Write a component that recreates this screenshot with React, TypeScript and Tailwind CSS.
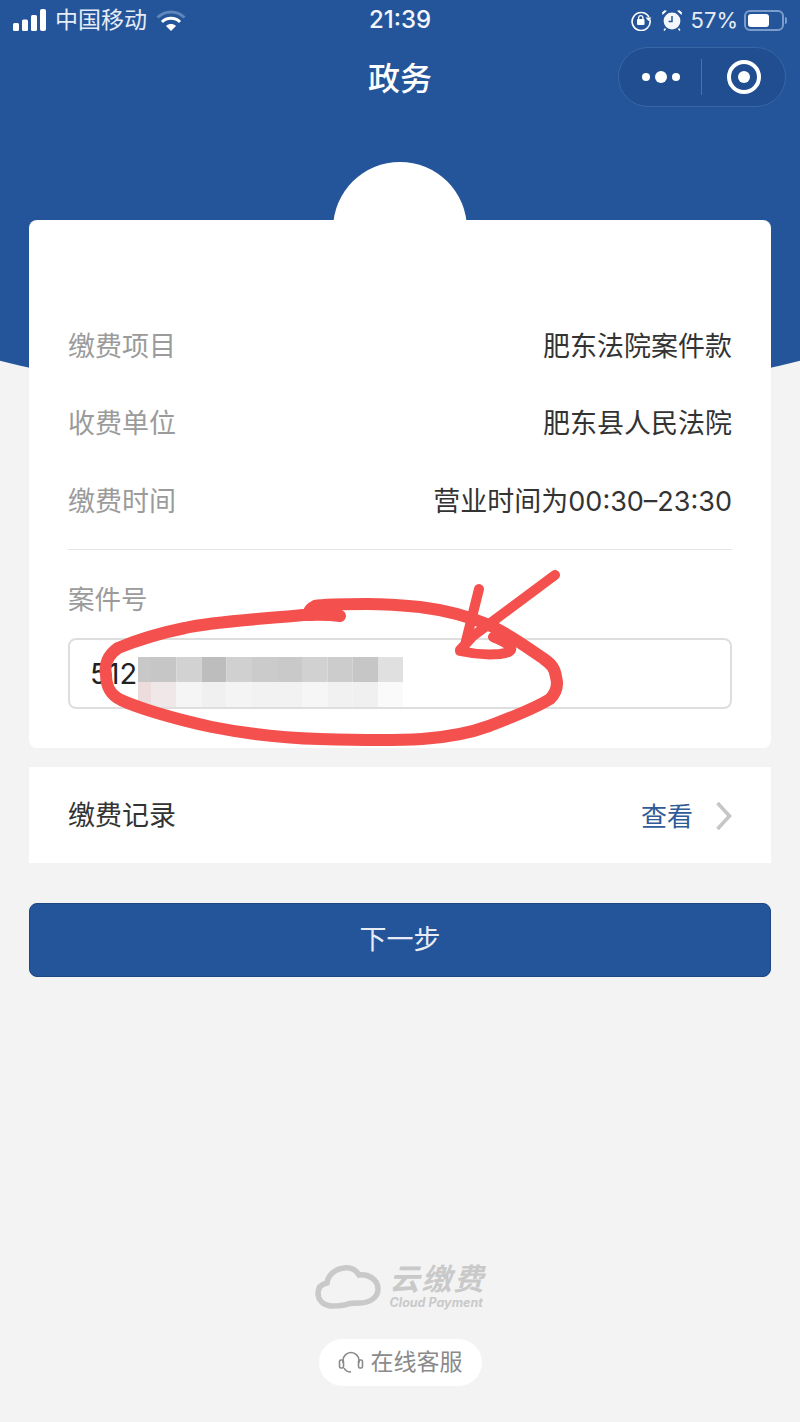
const rows = [
  { label: '缴费项目', value: '肥东法院案件款' },
  { label: '收费单位', value: '肥东县人民法院' },
  { label: '缴费时间', value: '营业时间为00:30–23:30' },
]

// mosaic over the case number: [x, width, top colour, bottom colour]
const mosaic = [
  [138, 13, '#c8c8c8', '#ecdcdc'],
  [151, 25.5, '#c6c6c6', '#f0e8e8'],
  [176.5, 25, '#d2d2d2', '#f5f5f5'],
  [201.5, 25, '#bdbdbd', '#f0f0f0'],
  [226.5, 25.5, '#d0d0d0', '#f4f4f4'],
  [252, 25, '#cbcbcb', '#f2f2f2'],
  [277, 25, '#c9c9c9', '#f2f2f2'],
  [302, 25.5, '#d1d1d1', '#f6f6f6'],
  [327.5, 25, '#cccccc', '#f1f1f1'],
  [352.5, 25.5, '#c6c6c6', '#f0f0f0'],
  [378, 25, '#e0e0e0', '#fafafa'],
] as const

const StatusIcons = () => (
  <div className="flex items-center">
    {/* rotation lock */}
    <svg width="22" height="22" viewBox="0 0 22 22" className="mr-[9px]" fill="none">
      <path d="M18.6 7.5A9 9 0 1 0 20 11" stroke="#fff" strokeWidth="1.6" strokeLinecap="round" />
      <path d="M15.5 8.5h6l-3 3.6z" fill="#fff" />
      <rect x="7" y="10" width="7.5" height="6" rx="1" fill="#fff" />
      <path d="M8.6 10V8.3a2.2 2.2 0 0 1 4.3 0V10" stroke="#fff" strokeWidth="1.3" />
    </svg>
    {/* alarm */}
    <svg width="22" height="22" viewBox="0 0 22 22" className="mr-[8px]">
      <circle cx="11" cy="12" r="8.4" fill="#f4f6fa" />
      <path d="M11 7v5.400H7.600" stroke="#24559a" strokeWidth="1.500" fill="none" />
      <path d="M1.500 6 6 1.800 3.600 1.200 1 3.400zM20.500 6 16 1.800l2.400-.6L21 3.400z" fill="#fff" />
      <path d="M4.500 19.500 3 21.500M17.500 19.500l1.500 2" stroke="#fff" strokeWidth="1.400" />
    </svg>
    <span className="text-[22px] leading-none text-[#e6ecf5] mr-[6px]">57%</span>
    {/* battery */}
    <div className="w-[40px] h-[21px] rounded-[6px] border-2 border-[#7c9ccb] p-[2px] mr-[1px]">
      <div className="w-[21px] h-full rounded-[3px] bg-white" />
    </div>
    <div className="w-[2px] h-[7px] rounded-r-full bg-[#7c9ccb]" />
  </div>
)

export default function App() {
  return (
    <div className="relative w-[800px] h-[1422px] overflow-hidden bg-[#f3f3f3] font-['Inter','Noto_Sans_CJK_SC',sans-serif]">
      {/* blue header shape behind everything */}
      <div className="absolute top-0 left-0 w-full h-[234px] bg-[#24559a]" />
      <div className="absolute top-[64px] left-[-200px] w-[1200px] h-[340px] rounded-[50%] bg-[#24559a]" />

      <div className="relative flex flex-col">
        {/* status bar */}
        <div className="grid grid-cols-[1fr_auto_1fr] items-center h-[40px] pl-[13px] pr-[13px] text-white">
          <div className="flex items-center">
            <svg width="33" height="22" viewBox="0 0 33 22" className="mr-[9px]" fill="#fff">
              <rect x="0" y="14" width="6" height="8" rx="1.500" />
              <rect x="9" y="10.500" width="6" height="11.500" rx="1.500" />
              <rect x="18" y="6" width="6" height="16" rx="1.500" />
              <rect x="27" y="0" width="6" height="22" rx="2" />
            </svg>
            <span className="text-[23px] leading-none text-[#e6ecf5]">中国移动</span>
            <svg width="30" height="24" viewBox="0 0 30 24" className="ml-[9px]" fill="none">
              <path d="M1.500 9.500C9 2 21 2 28.500 9.500" stroke="#5f86bb" strokeWidth="3" />
              <path d="M6 14c5-5 13-5 18 0" stroke="#fff" strokeWidth="3" />
              <path d="M15 23l-5-5c3-2.600 7-2.600 10 0z" fill="#fff" />
            </svg>
          </div>
          <div className="text-[24px] leading-none font-medium text-[#f4f6fa]">21:39</div>
          <div className="justify-self-end">
            <StatusIcons />
          </div>
        </div>

        {/* nav bar */}
        <div className="grid grid-cols-[1fr_auto_1fr] items-center h-[60px] mt-[7px] px-[14px]">
          <div />
          <div className="text-[32px] leading-none font-medium text-white pt-[3px]">政务</div>
          <div className="justify-self-end flex items-center w-[168px] h-[60px] rounded-full bg-[#214e90] border border-[#3a66a5]">
            <div className="flex-1 flex items-center justify-center gap-[5px] pl-[2px]">
              <div className="w-[8px] h-[8px] rounded-full bg-white" />
              <div className="w-[12px] h-[12px] rounded-full bg-white" />
              <div className="w-[8px] h-[8px] rounded-full bg-white" />
            </div>
            <div className="w-px h-[36px] bg-[#4a72ac]" />
            <div className="w-[83px] flex items-center justify-center">
              <div className="flex items-center justify-center w-[34px] h-[34px] rounded-full border-[4px] border-white">
                <div className="w-[12px] h-[12px] rounded-full bg-white" />
              </div>
            </div>
          </div>
        </div>

        {/* main card */}
        <div className="relative mt-[113px] mx-[29px] rounded-[8px] bg-white pt-[87px] px-[39px] pb-[39px]">
          <div className="absolute top-[-58px] left-[304px] w-[134px] h-[134px] rounded-full bg-white" />
          <div className="relative">
            {rows.map((row) => (
              <div key={row.label} className="flex items-center justify-between h-[77.5px] pt-[2px] text-[27px]">
                <span className="text-[#9b9b9b]">{row.label}</span>
                <span className="text-[#333]">{row.value}</span>
              </div>
            ))}
            <div className="h-px bg-[#e6e6e6] mt-[9px]" />
            <div className="text-[26.5px] leading-none text-[#9b9b9b] mt-[36px]">案件号</div>
            <div className="flex items-center h-[71px] mt-[26px] pl-[20px] rounded-[8px] border-2 border-[#dedede] text-[29px] text-[#222]">
              512
            </div>
          </div>
        </div>

        {/* payment records */}
        <div className="flex items-center justify-between h-[96px] mt-[19px] mx-[29px] pt-[2px] px-[39px] bg-white text-[27px]">
          <span className="text-[#333]">缴费记录</span>
          <div className="flex items-center gap-[22px]">
            <span className="text-[26px] text-[#2f5b97]">查看</span>
            <svg width="17" height="30" viewBox="0 0 17 30" fill="none">
              <path d="M2.500 2 14.500 15 2.500 28" stroke="#c6c6c6" strokeWidth="3.600" />
            </svg>
          </div>
        </div>

        <button className="flex items-center justify-center h-[74px] mt-[40px] mx-[29px] rounded-[8px] bg-[#24559a] border border-[#1e4682] text-[27px] text-[#e8edf5]">
          下一步
        </button>

        {/* footer logo */}
        <div className="flex items-center justify-center mt-[285px] h-[50px]">
          <svg width="66" height="46" viewBox="0 0 66 46" fill="none" className="mr-[9px]">
            <path
              d="M16 42C8 41 3 36 3 29c0-6 4-9 9-10 1-8 8-14 17-15 7-1 12 2 15 7 9-1 19 4 19 14 0 9-9 14-18 14-5 0-8 0-12 1-5 2-11 2-17 2z"
              fill="#f3f3f3"
              stroke="#c9c9c9"
              strokeWidth="5.500"
            />
          </svg>
          <div className="flex flex-col items-start">
            <span className="text-[30px] leading-[32px] font-bold italic tracking-[2px] text-[#c9c9c9]">云缴费</span>
            <span className="text-[12.5px] leading-[16px] font-bold italic text-[#c9c9c9]">Cloud Payment</span>
          </div>
        </div>

        {/* online service */}
        <div className="flex justify-center mt-[27px]">
          <div className="flex items-center justify-center w-[163px] h-[47px] rounded-full bg-white text-[23px] text-[#8a8a8a]">
            <svg width="26" height="24" viewBox="0 0 26 24" fill="none" stroke="#8a8a8a" strokeWidth="1.600" className="mr-[7px]">
              <path d="M5 12V9.500a8 8 0 0 1 16 0V12" />
              <rect x="1.500" y="9" width="4" height="8" rx="1.500" />
              <rect x="20.500" y="9" width="4" height="8" rx="1.500" />
              <path d="M6 17c1.500 3 4 4 7 4" />
            </svg>
            在线客服
          </div>
        </div>
      </div>

      {/* hand annotation drawn over the screenshot */}
      <svg className="absolute top-0 left-0 pointer-events-none" width="800" height="1422" viewBox="0 0 800 1422" fill="none">
        {mosaic.map(([x, w, top, bottom]) => (
          <g key={x}>
            <rect x={x} y="657" width={w} height="25" fill={top} />
            <rect x={x} y="682" width={w} height="25" fill={bottom} />
          </g>
        ))}
        <path
          d="M340 616C325 614 312 615 303 615C265 619 215 621 185 628C160 633 135 641 118 648C108 655 104 665 106 674C106 685 109 694 121 700C136 707 170 718 212 727C252 735 287 738 320 739C353 740 388 741 422 739C450 737 470 733 489 726C510 718 532 710 550 699C557 692 558 684 556 677C555 668 551 664 544 659C527 647 509 634 489 625C468 616 444 610 420 607C400 605 384 604 367 604C345 604 325 604 315 606C311 608 309 610 310 612"
          stroke="#f4504e"
          strokeWidth="12"
          strokeLinecap="round"
          strokeLinejoin="round"
        />
        <path
          d="M555 575L473 636L460 650M479 589L464 649M460 651C473 654 488 655 500 654C508 653 512 651 511 648C508 643 499 640 493 637"
          stroke="#f4504e"
          strokeWidth="10"
          strokeLinecap="round"
          strokeLinejoin="round"
        />
      </svg>
    </div>
  )
}
